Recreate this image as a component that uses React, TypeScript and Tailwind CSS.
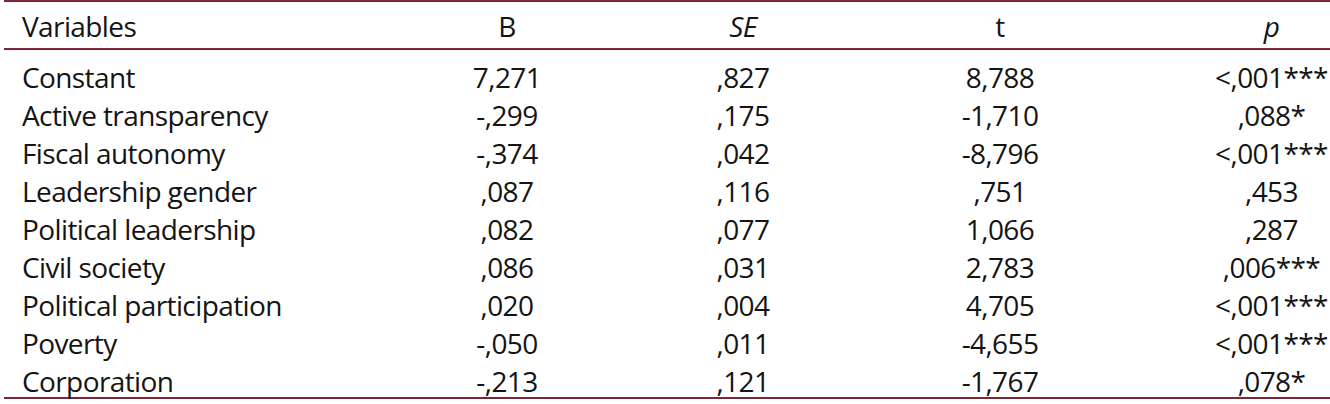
import React from 'react';

const ROWS = [
  { name: 'Constant', b: '7,271', se: ',827', t: '8,788', p: '<,001***' },
  { name: 'Active transparency', b: '-,299', se: ',175', t: '-1,710', p: ',088*' },
  { name: 'Fiscal autonomy', b: '-,374', se: ',042', t: '-8,796', p: '<,001***' },
  { name: 'Leadership gender', b: ',087', se: ',116', t: ',751', p: ',453' },
  { name: 'Political leadership', b: ',082', se: ',077', t: '1,066', p: ',287' },
  { name: 'Civil society', b: ',086', se: ',031', t: '2,783', p: ',006***' },
  { name: 'Political participation', b: ',020', se: ',004', t: '4,705', p: '<,001***' },
  { name: 'Poverty', b: '-,050', se: ',011', t: '-4,655', p: '<,001***' },
  { name: 'Corporation', b: '-,213', se: ',121', t: '-1,767', p: ',078*' },
];

const cols = 'grid grid-cols-[385px_236px_236px_278px_191px]';

const App: React.FC = () => {
  return (
    <div className="bg-white w-[1330px] h-[404px] pl-[4px] text-[#141414] text-[28px] tracking-[-0.6px] font-['Open_Sans',sans-serif]">
      <div className="border-t-2 border-b-2 border-[#7a2837]">
        {/* Header */}
        <div className={`${cols} h-[48px] leading-[48px] border-b-2 border-[#7a2837]`}>
          <div className="pl-[18px]">Variables</div>
          <div className="text-center">B</div>
          <div className="text-center italic">SE</div>
          <div className="text-center">t</div>
          <div className="text-center italic pl-[74px]">p</div>
        </div>

        {/* Body */}
        <div className="pt-[5px]">
          {ROWS.map((row) => (
            <div key={row.name} className={`${cols} h-[38px] pt-[3px] leading-[38px]`}>
              <div className="pl-[18px] whitespace-nowrap">{row.name}</div>
              <div className="text-center">{row.b}</div>
              <div className="text-center">{row.se}</div>
              <div className="text-center">{row.t}</div>
              <div className="text-center pl-[74px] whitespace-nowrap">{row.p}</div>
            </div>
          ))}
        </div>
      </div>
    </div>
  );
};

export default App;
